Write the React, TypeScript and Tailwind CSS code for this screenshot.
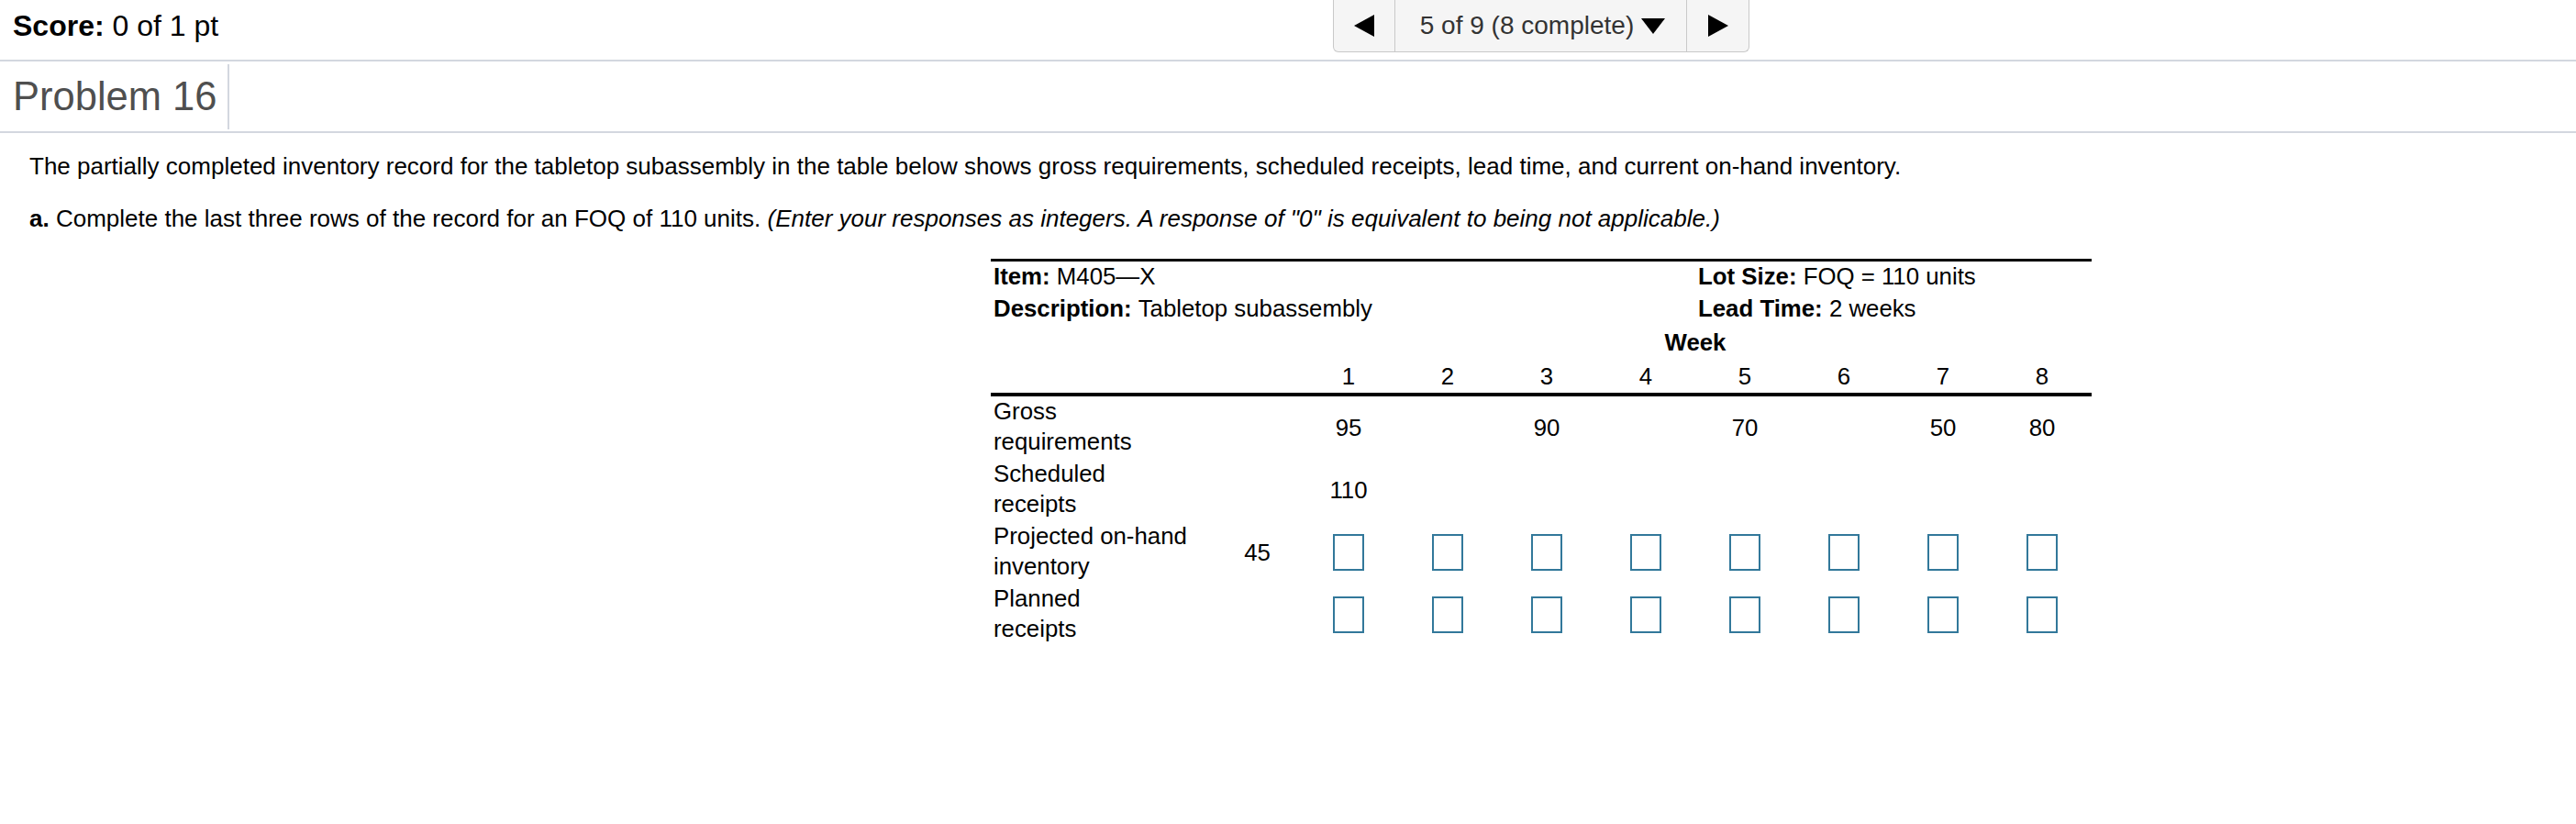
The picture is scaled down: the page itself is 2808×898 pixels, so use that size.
import React from 'react';

const weeks = [1, 2, 3, 4, 5, 6, 7, 8];
const gross: Record<number, string> = { 1: '95', 3: '90', 5: '70', 7: '50', 8: '80' };
const scheduled: Record<number, string> = { 1: '110' };

function Box() {
  return <input type="text" readOnly className="w-[34px] h-[40px] border-2 border-[#32789a] bg-white outline-none" />;
}

export default function App() {
  return (
    <div className="w-[2808px] h-[898px] bg-white text-black font-['Liberation_Sans',Arial,sans-serif] overflow-hidden">
      {/* Top bar */}
      <div className="flex h-[67px] border-b-2 border-[#d3d7df]">
        <div className="w-[1453px] pl-[14px] pt-[10px] text-[32px] leading-[36px]">
          <span className="font-bold">Score:</span> 0 of 1 pt
        </div>
        <div className="flex h-[57px] border border-t-0 border-[#c9c9c9] rounded-b-[6px] bg-[#f5f5f5] text-[#333]">
          <button className="w-[67px] flex items-center justify-center border-r border-[#c9c9c9]">
            <svg width="22" height="24" viewBox="0 0 22 24"><path d="M22 0 L0 12 L22 24 Z" fill="#000" /></svg>
          </button>
          <button className="w-[318px] flex items-center justify-center gap-[8px] text-[28px] pl-[4px] border-r border-[#c9c9c9]">
            <span>5 of 9 (8 complete)</span>
            <svg width="26" height="17" viewBox="0 0 26 17"><path d="M0 0 L26 0 L13 17 Z" fill="#000" /></svg>
          </button>
          <button className="w-[67px] flex items-center justify-center">
            <svg width="22" height="24" viewBox="0 0 22 24"><path d="M0 0 L22 12 L0 24 Z" fill="#000" /></svg>
          </button>
        </div>
      </div>

      {/* Problem title */}
      <div className="flex items-center h-[78px] border-b-2 border-[#d3d7df]">
        <div className="pl-[14px] pr-[12px] text-[43.5px] leading-[50px] text-[#4f4f4f]">Problem 16</div>
        <div className="w-[2px] h-[71px] bg-[#d3d7df]" />
      </div>

      {/* Body */}
      <div className="pl-[32px] text-[26px] leading-[32px]">
        <p className="mt-[20px]">
          The partially completed inventory record for the tabletop subassembly in the table below shows gross requirements, scheduled receipts, lead time, and current on-hand inventory.
        </p>
        <p className="mt-[25px]">
          <span className="font-bold">a.</span> Complete the last three rows of the record for an FOQ of 110 units.{' '}
          <span className="italic">(Enter your responses as integers. A response of "0" is equivalent to being not applicable.)</span>
        </p>
      </div>

      {/* MRP record */}
      <div className="ml-[1080px] mt-[28px] w-[1200px] border-t-[3px] border-black text-[25.8px]">
        <div className="grid grid-cols-[245px_91px_repeat(8,108px)]">
          <div className="col-span-6 h-[33px] flex items-center pl-[3px]">
            <span className="font-bold">Item:</span>&nbsp;M405—X
          </div>
          <div className="col-span-4 h-[33px] flex items-center pl-[3px]">
            <span className="font-bold">Lot Size:</span>&nbsp;FOQ = 110 units
          </div>

          <div className="col-span-6 h-[37px] flex items-center pl-[3px]">
            <span className="font-bold">Description:</span>&nbsp;Tabletop subassembly
          </div>
          <div className="col-span-4 h-[37px] flex items-center pl-[3px]">
            <span className="font-bold">Lead Time:</span>&nbsp;2 weeks
          </div>

          <div className="col-start-3 col-span-8 h-[37px] flex items-center justify-center font-bold">Week</div>

          <div className="col-span-2 h-[36px]" />
          {weeks.map((w) => (
            <div key={w} className="h-[36px] flex items-center justify-center">{w}</div>
          ))}

          <div className="col-span-10 h-[4px] bg-black" />

          {/* Gross requirements */}
          <div className="h-[68px] pl-[3px] leading-[33px] whitespace-nowrap">Gross<br />requirements</div>
          <div />
          {weeks.map((w) => (
            <div key={w} className="h-[68px] flex items-center justify-center">{gross[w] ?? ''}</div>
          ))}

          {/* Scheduled receipts */}
          <div className="h-[68px] pl-[3px] leading-[33px] whitespace-nowrap">Scheduled<br />receipts</div>
          <div />
          {weeks.map((w) => (
            <div key={w} className="h-[68px] flex items-center justify-center">{scheduled[w] ?? ''}</div>
          ))}

          {/* Projected on-hand inventory */}
          <div className="h-[68px] pl-[3px] leading-[33px] whitespace-nowrap">Projected on-hand<br />inventory</div>
          <div className="h-[68px] flex items-center justify-center">45</div>
          {weeks.map((w) => (
            <div key={w} className="h-[68px] flex items-center justify-center"><Box /></div>
          ))}

          {/* Planned receipts */}
          <div className="h-[68px] pl-[3px] leading-[33px] whitespace-nowrap">Planned<br />receipts</div>
          <div />
          {weeks.map((w) => (
            <div key={w} className="h-[68px] flex items-center justify-center"><Box /></div>
          ))}
        </div>
      </div>
    </div>
  );
}
